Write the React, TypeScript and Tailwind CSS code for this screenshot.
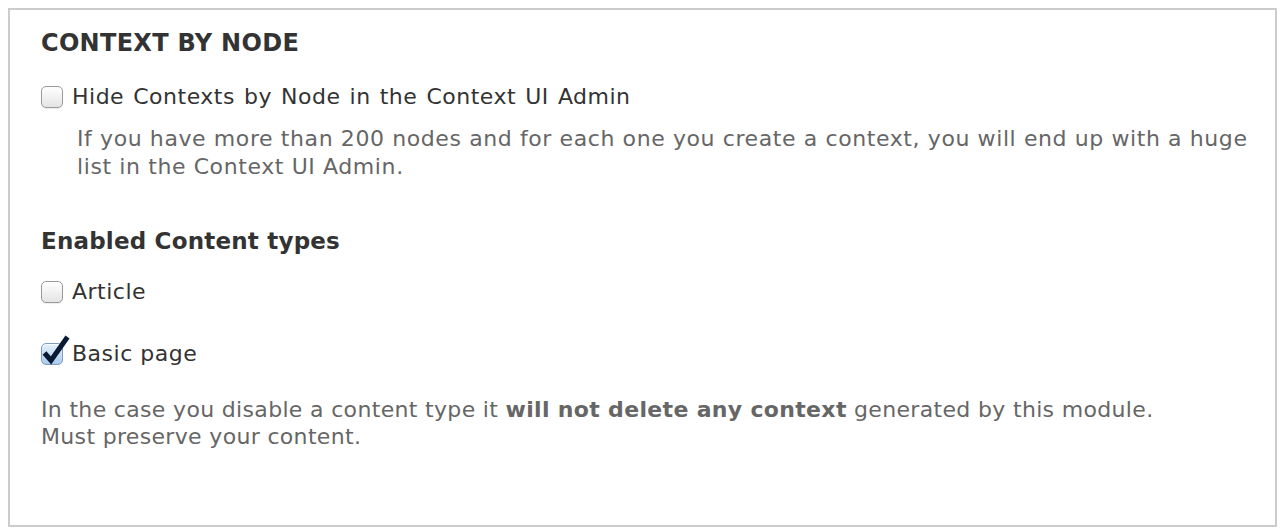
import React from "react";

function Box({ checked }: { checked?: boolean }) {
  return (
    <span className="relative inline-block w-[22px] h-[22px] shrink-0">
      {checked ? (
        <span className="absolute inset-0 rounded-[5px] border border-[#7f9cc0] bg-gradient-to-b from-[#e6f0fc] to-[#a9cbf0] shadow-[inset_0_1px_1px_rgba(255,255,255,0.8)]" />
      ) : (
        <span className="absolute inset-0 rounded-[5px] border border-[#9a9a9a] bg-gradient-to-b from-[#ffffff] to-[#e4e4e4] shadow-[0_1px_1px_rgba(0,0,0,0.08)]" />
      )}
      {checked && (
        <svg
          className="absolute left-0 top-[-8px] overflow-visible"
          width="30"
          height="32"
          viewBox="0 0 30 32"
        >
          <polyline
            points="3.5,18 10,25.5 26.5,2"
            fill="none"
            stroke="#0b1a33"
            strokeWidth="5"
            strokeLinejoin="miter"
            strokeLinecap="butt"
          />
        </svg>
      )}
    </span>
  );
}

export default function App() {
  const font = { fontFamily: '"DejaVu Sans", Verdana, sans-serif' };
  return (
    <div className="w-[1286px] h-[532px] bg-white p-2" style={font}>
      <div className="w-[1269px] h-[519px] border-2 border-[#cccccc] pl-[31px] pt-[18px]">
        <h2 className="text-[24px] leading-[30px] font-bold text-[#333333] tracking-[0.3px]">
          CONTEXT BY NODE
        </h2>
        <label className="mt-[25px] flex items-center gap-[9px] text-[22px] leading-[28px] text-[#333333] tracking-[0.5px] [word-spacing:1.6px]">
          <Box />
          <span>Hide Contexts by Node in the Context UI Admin</span>
        </label>
        <p className="mt-[14px] ml-[36px] text-[22px] leading-[28px] text-[#666666] w-[1180px] tracking-[0.6px]">
          If you have more than 200 nodes and for each one you create a context, you will end up with a huge list in the Context UI Admin.
        </p>
        <h3 className="mt-[45px] text-[23px] leading-[30px] font-bold text-[#333333] tracking-[0.2px]">
          Enabled Content types
        </h3>
        <label className="mt-[22px] flex items-center gap-[9px] text-[22px] leading-[28px] text-[#333333] tracking-[0.5px]">
          <Box />
          <span>Article</span>
        </label>
        <label className="mt-[34px] flex items-center gap-[9px] text-[22px] leading-[28px] text-[#333333] tracking-[0.5px]">
          <Box checked />
          <span>Basic page</span>
        </label>
        <p className="mt-[28px] text-[22px] leading-[27px] text-[#666666] tracking-[0.33px]">
          In the case you disable a content type it <strong className="font-bold">will not delete any context</strong> generated by this module.
          <br />
          Must preserve your content.
        </p>
      </div>
    </div>
  );
}
